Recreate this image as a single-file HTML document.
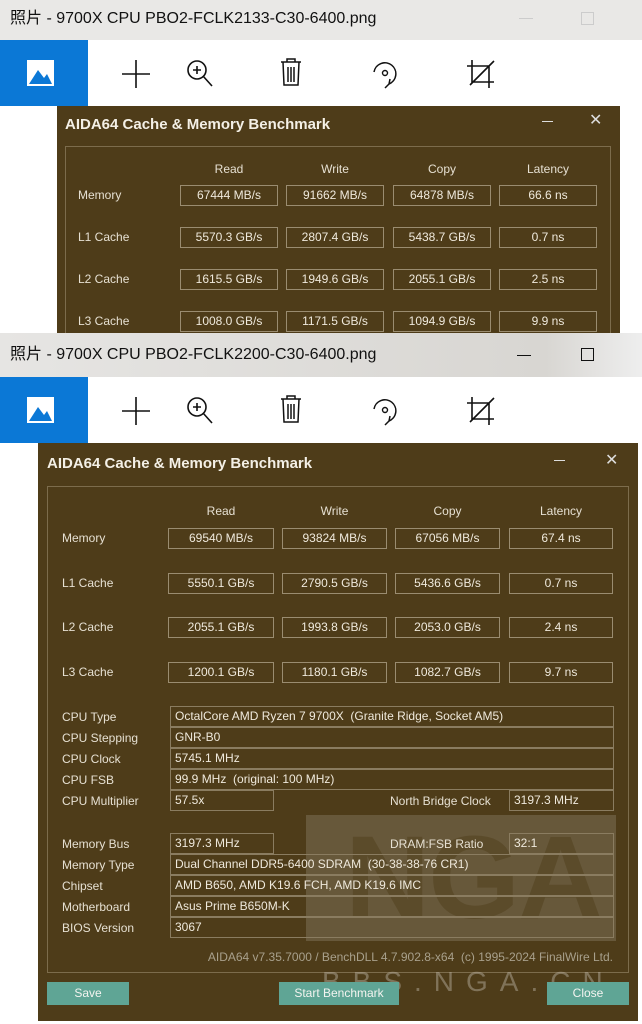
<!DOCTYPE html>
<html><head><meta charset="utf-8"><style>
*{margin:0;padding:0;box-sizing:border-box}
body{width:642px;height:1024px;background:#fff;position:relative;overflow:hidden;font-family:"Liberation Sans","Noto Sans CJK SC",sans-serif}
.a{position:absolute}
.tb{left:0;width:642px;background:#e9e8e6;font-size:16px;color:#111;padding-left:10px}
.tool{left:0;width:642px;background:#fff}
.blue{left:0;width:88px;background:#0b78d6}
.dlg{background:#4e3c19;color:#e6e0d2}
.ttl{font-weight:bold;font-size:15px;color:#f4f0e6}
.fr{border:1px solid #7c6c4c}
.box{position:absolute;border:1px solid #9a8c70;height:21px;font-size:12px;text-align:center;line-height:19px;color:#efe9dc}
.lb{position:absolute;font-size:12px;color:#e6e0d2}
.hd{position:absolute;font-size:12px;text-align:center;color:#e6e0d2}
.vb{position:absolute;border:1px solid #8a7c60;height:21px;font-size:12px;line-height:19px;padding-left:4px;color:#efe9dc}
.btn{position:absolute;background:#5fa595;color:#f4f4f0;font-size:12px;text-align:center;line-height:22px;height:23px}
svg{position:absolute}
</style></head><body>
<div class="a tb" style="top:0;height:40px;line-height:38px">照片 - 9700X CPU PBO2-FCLK2133-C30-6400.png</div>
<div class="a" style="left:519px;top:18px;width:14px;height:1px;background:#ccc"></div>
<div class="a" style="left:581px;top:12px;width:13px;height:13px;border:1px solid #ccc"></div>
<div class="a tool" style="top:40px;height:66px"></div>
<div class="a blue" style="top:40px;height:66px"></div>
<svg style="left:0;top:40px" width="642" height="66" viewBox="0 0 642 66">
<rect x="27" y="20" width="27" height="26" fill="#fff"/><path d="M29 44 L38 30 L44 38 L47 34 L52 44Z" fill="#0b78d6"/>
<path d="M122 34H150M136 20V48" stroke="#111" stroke-width="1.6"/>
<circle cx="197" cy="30" r="9" fill="none" stroke="#111" stroke-width="1.6"/><path d="M193 30h8M197 26v8M203 36l9 10" stroke="#111" stroke-width="1.6"/>
<path d="M281 22h20M287 22v-3h8v3M283 22l1 23h14l1-23M288 27v15M291 27v15M294 27v15" fill="none" stroke="#111" stroke-width="1.5"/>
<path d="M374 32a11 11 0 1 1 15 12M389 44l-4 4M389 44l1-5" fill="none" stroke="#111" stroke-width="1.5"/><circle cx="385" cy="33" r="2.5" fill="none" stroke="#111" stroke-width="1.4"/>
<path d="M472 20v22h22M467 26h22v22M470 45l24-24" fill="none" stroke="#111" stroke-width="1.6"/>
</svg>
<div class="a dlg" style="left:57px;top:106px;width:563px;height:227px">
<div class="a ttl" style="left:8px;top:10px">AIDA64 Cache &amp; Memory Benchmark</div>
<div class="a" style="left:485px;top:15px;width:11px;height:1px;background:#ddd"></div>
<div class="a" style="left:532px;top:4px;font-size:16px;color:#ddd">✕</div>
<div class="a fr" style="left:8px;top:40px;width:546px;height:200px"></div>
</div>
<div class="hd" style="left:180px;top:162px;width:98px">Read</div>
<div class="hd" style="left:286px;top:162px;width:98px">Write</div>
<div class="hd" style="left:393px;top:162px;width:98px">Copy</div>
<div class="hd" style="left:499px;top:162px;width:98px">Latency</div>
<div class="lb" style="left:78px;top:188px">Memory</div>
<div class="lb" style="left:78px;top:230px">L1 Cache</div>
<div class="lb" style="left:78px;top:272px">L2 Cache</div>
<div class="lb" style="left:78px;top:314px">L3 Cache</div>
<div class="box" style="left:180px;top:185px;width:98px">67444 MB/s</div>
<div class="box" style="left:286px;top:185px;width:98px">91662 MB/s</div>
<div class="box" style="left:393px;top:185px;width:98px">64878 MB/s</div>
<div class="box" style="left:499px;top:185px;width:98px">66.6 ns</div>
<div class="box" style="left:180px;top:227px;width:98px">5570.3 GB/s</div>
<div class="box" style="left:286px;top:227px;width:98px">2807.4 GB/s</div>
<div class="box" style="left:393px;top:227px;width:98px">5438.7 GB/s</div>
<div class="box" style="left:499px;top:227px;width:98px">0.7 ns</div>
<div class="box" style="left:180px;top:269px;width:98px">1615.5 GB/s</div>
<div class="box" style="left:286px;top:269px;width:98px">1949.6 GB/s</div>
<div class="box" style="left:393px;top:269px;width:98px">2055.1 GB/s</div>
<div class="box" style="left:499px;top:269px;width:98px">2.5 ns</div>
<div class="box" style="left:180px;top:311px;width:98px">1008.0 GB/s</div>
<div class="box" style="left:286px;top:311px;width:98px">1171.5 GB/s</div>
<div class="box" style="left:393px;top:311px;width:98px">1094.9 GB/s</div>
<div class="box" style="left:499px;top:311px;width:98px">9.9 ns</div>

<div class="a tb" style="top:333px;height:44px;line-height:44px;background:linear-gradient(90deg,#e6e5e3,#d8d6d2 85%,#eee)">照片 - 9700X CPU PBO2-FCLK2200-C30-6400.png</div>
<div class="a" style="left:517px;top:355px;width:14px;height:1px;background:#111"></div>
<div class="a" style="left:581px;top:348px;width:13px;height:13px;border:1px solid #111"></div>
<div class="a tool" style="top:377px;height:66px"></div>
<div class="a blue" style="top:377px;height:66px"></div>
<svg style="left:0;top:377px" width="642" height="66" viewBox="0 0 642 66">
<rect x="27" y="20" width="27" height="26" fill="#fff"/><path d="M29 44 L38 30 L44 38 L47 34 L52 44Z" fill="#0b78d6"/>
<path d="M122 34H150M136 20V48" stroke="#111" stroke-width="1.6"/>
<circle cx="197" cy="30" r="9" fill="none" stroke="#111" stroke-width="1.6"/><path d="M193 30h8M197 26v8M203 36l9 10" stroke="#111" stroke-width="1.6"/>
<path d="M281 22h20M287 22v-3h8v3M283 22l1 23h14l1-23M288 27v15M291 27v15M294 27v15" fill="none" stroke="#111" stroke-width="1.5"/>
<path d="M374 32a11 11 0 1 1 15 12M389 44l-4 4M389 44l1-5" fill="none" stroke="#111" stroke-width="1.5"/><circle cx="385" cy="33" r="2.5" fill="none" stroke="#111" stroke-width="1.4"/>
<path d="M472 20v22h22M467 26h22v22M470 45l24-24" fill="none" stroke="#111" stroke-width="1.6"/>
</svg>
<div class="a dlg" style="left:38px;top:443px;width:600px;height:578px">
<div class="a ttl" style="left:9px;top:12px">AIDA64 Cache &amp; Memory Benchmark</div>
<div class="a" style="left:516px;top:17px;width:11px;height:1px;background:#ddd"></div>
<div class="a" style="left:567px;top:7px;font-size:16px;color:#ddd">✕</div>
<div class="a fr" style="left:9px;top:43px;width:582px;height:487px"></div>
</div>
<div class="a" style="left:306px;top:815px;width:310px;height:126px;background:rgba(170,160,145,0.28)"></div>
<div class="a" style="left:345px;top:818px;font-size:118px;font-weight:bold;color:rgba(78,60,25,0.45);letter-spacing:-2px;line-height:120px">NGA</div>
<div class="a" style="left:322px;top:966px;font-size:28px;color:rgba(190,182,168,0.45);letter-spacing:12px">BBS.NGA.CN</div>

<div class="hd" style="left:168px;top:504px;width:106px">Read</div>
<div class="hd" style="left:282px;top:504px;width:105px">Write</div>
<div class="hd" style="left:395px;top:504px;width:105px">Copy</div>
<div class="hd" style="left:509px;top:504px;width:104px">Latency</div>
<div class="lb" style="left:62px;top:531px">Memory</div>
<div class="lb" style="left:62px;top:576px">L1 Cache</div>
<div class="lb" style="left:62px;top:620px">L2 Cache</div>
<div class="lb" style="left:62px;top:665px">L3 Cache</div>
<div class="box" style="left:168px;top:528px;width:106px">69540 MB/s</div>
<div class="box" style="left:282px;top:528px;width:105px">93824 MB/s</div>
<div class="box" style="left:395px;top:528px;width:105px">67056 MB/s</div>
<div class="box" style="left:509px;top:528px;width:104px">67.4 ns</div>
<div class="box" style="left:168px;top:573px;width:106px">5550.1 GB/s</div>
<div class="box" style="left:282px;top:573px;width:105px">2790.5 GB/s</div>
<div class="box" style="left:395px;top:573px;width:105px">5436.6 GB/s</div>
<div class="box" style="left:509px;top:573px;width:104px">0.7 ns</div>
<div class="box" style="left:168px;top:617px;width:106px">2055.1 GB/s</div>
<div class="box" style="left:282px;top:617px;width:105px">1993.8 GB/s</div>
<div class="box" style="left:395px;top:617px;width:105px">2053.0 GB/s</div>
<div class="box" style="left:509px;top:617px;width:104px">2.4 ns</div>
<div class="box" style="left:168px;top:662px;width:106px">1200.1 GB/s</div>
<div class="box" style="left:282px;top:662px;width:105px">1180.1 GB/s</div>
<div class="box" style="left:395px;top:662px;width:105px">1082.7 GB/s</div>
<div class="box" style="left:509px;top:662px;width:104px">9.7 ns</div>

<div class="lb" style="left:62px;top:710px">CPU Type</div>
<div class="lb" style="left:62px;top:731px">CPU Stepping</div>
<div class="lb" style="left:62px;top:752px">CPU Clock</div>
<div class="lb" style="left:62px;top:773px">CPU FSB</div>
<div class="lb" style="left:62px;top:794px">CPU Multiplier</div>
<div class="vb" style="left:170px;top:706px;width:444px">OctalCore AMD Ryzen 7 9700X&nbsp; (Granite Ridge, Socket AM5)</div>
<div class="vb" style="left:170px;top:727px;width:444px">GNR-B0</div>
<div class="vb" style="left:170px;top:748px;width:444px">5745.1 MHz</div>
<div class="vb" style="left:170px;top:769px;width:444px">99.9 MHz&nbsp; (original: 100 MHz)</div>
<div class="vb" style="left:170px;top:790px;width:104px">57.5x</div>
<div class="lb" style="left:390px;top:794px">North Bridge Clock</div>
<div class="vb" style="left:509px;top:790px;width:105px">3197.3 MHz</div>

<div class="lb" style="left:62px;top:837px">Memory Bus</div>
<div class="lb" style="left:62px;top:858px">Memory Type</div>
<div class="lb" style="left:62px;top:879px">Chipset</div>
<div class="lb" style="left:62px;top:900px">Motherboard</div>
<div class="lb" style="left:62px;top:921px">BIOS Version</div>
<div class="vb" style="left:170px;top:833px;width:104px">3197.3 MHz</div>
<div class="lb" style="left:390px;top:837px">DRAM:FSB Ratio</div>
<div class="vb" style="left:509px;top:833px;width:105px">32:1</div>
<div class="vb" style="left:170px;top:854px;width:444px">Dual Channel DDR5-6400 SDRAM&nbsp; (30-38-38-76 CR1)</div>
<div class="vb" style="left:170px;top:875px;width:444px">AMD B650, AMD K19.6 FCH, AMD K19.6 IMC</div>
<div class="vb" style="left:170px;top:896px;width:444px">Asus Prime B650M-K</div>
<div class="vb" style="left:170px;top:917px;width:444px">3067</div>
<div class="a" style="left:200px;top:950px;width:413px;text-align:right;font-size:12px;color:#a8a08c">AIDA64 v7.35.7000 / BenchDLL 4.7.902.8-x64&nbsp; (c) 1995-2024 FinalWire Ltd.</div>
<div class="btn" style="left:47px;top:982px;width:82px">Save</div>
<div class="btn" style="left:279px;top:982px;width:120px">Start Benchmark</div>
<div class="btn" style="left:547px;top:982px;width:82px">Close</div>
</body></html>
